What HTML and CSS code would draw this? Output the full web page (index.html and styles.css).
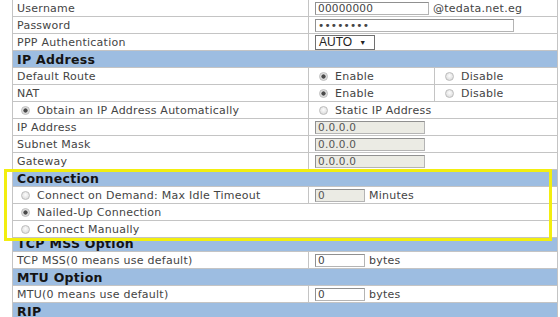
FILE: index.html
```html
<!DOCTYPE html>
<html lang="en">
<head>
  <meta charset="UTF-8">
  <title>WAN Setup</title>
  <link rel="stylesheet" href="styles.css">
</head>
<body>
  <div class="panel">
    <div class="row">
      <div class="label">Username</div>
      <div class="value"><input class="field w-user" type="text" value="00000000"><span class="unit">@tedata.net.eg</span></div>
    </div>
    <div class="row">
      <div class="label">Password</div>
      <div class="value"><input class="field w-pass" type="password" value="00000000"></div>
    </div>
    <div class="row">
      <div class="label">PPP Authentication</div>
      <div class="value"><span class="select">AUTO<span class="arrow">&#9660;</span></span></div>
    </div>

    <div class="row head">IP Address</div>
    <div class="row">
      <div class="label">Default Route</div>
      <div class="value half"><label class="opt"><input type="radio" name="route" checked>Enable</label></div>
      <div class="value"><label class="opt"><input type="radio" name="route">Disable</label></div>
    </div>
    <div class="row">
      <div class="label">NAT</div>
      <div class="value half"><label class="opt"><input type="radio" name="nat" checked>Enable</label></div>
      <div class="value"><label class="opt"><input type="radio" name="nat">Disable</label></div>
    </div>
    <div class="row">
      <div class="label"><label class="opt"><input type="radio" name="ip" checked>Obtain an IP Address Automatically</label></div>
      <div class="value"><label class="opt"><input type="radio" name="ip">Static IP Address</label></div>
    </div>
    <div class="row">
      <div class="label">IP Address</div>
      <div class="value"><input class="field w-ip" type="text" value="0.0.0.0" disabled></div>
    </div>
    <div class="row">
      <div class="label">Subnet Mask</div>
      <div class="value"><input class="field w-ip" type="text" value="0.0.0.0" disabled></div>
    </div>
    <div class="row">
      <div class="label">Gateway</div>
      <div class="value"><input class="field w-ip" type="text" value="0.0.0.0" disabled></div>
    </div>

    <div class="row head">Connection</div>
    <div class="row">
      <div class="label"><label class="opt"><input type="radio" name="conn">Connect on Demand: Max Idle Timeout</label></div>
      <div class="value"><input class="field w-num" type="text" value="0" disabled><span class="unit">Minutes</span></div>
    </div>
    <div class="row">
      <div class="full"><label class="opt"><input type="radio" name="conn" checked>Nailed-Up Connection</label></div>
    </div>
    <div class="row">
      <div class="full"><label class="opt"><input type="radio" name="conn">Connect Manually</label></div>
    </div>

    <div class="row head short"><span>TCP MSS Option</span></div>
    <div class="row">
      <div class="label">TCP MSS(0 means use default)</div>
      <div class="value"><input class="field w-num" type="text" value="0"><span class="unit">bytes</span></div>
    </div>

    <div class="row head">MTU Option</div>
    <div class="row">
      <div class="label">MTU(0 means use default)</div>
      <div class="value"><input class="field w-num" type="text" value="0"><span class="unit">bytes</span></div>
    </div>

    <div class="row head">RIP</div>
  </div>

  <!-- highlight drawn over the connection block -->
  <div class="mark"></div>
</body>
</html>
```

FILE: styles.css
```css
* {
  box-sizing: border-box;
}

body {
  margin: 0;
  background: #fff;
  font-family: "DejaVu Sans", Verdana, sans-serif;
  font-size: 11px;
  letter-spacing: 0.25px;
  color: #444;
  overflow: hidden;
}

.panel {
  margin-left: 12px;
  width: 546px;
  border-left: 1px solid #c4c4c4;
  border-right: 1px solid #c4c4c4;
}

.row {
  display: flex;
  height: 17px;
  border-bottom: 1px solid #c4c4c4;
}

.label {
  width: 296px;
  border-right: 1px solid #c4c4c4;
  padding-left: 4px;
  display: flex;
  align-items: center;
}

.value {
  flex: 1;
  padding-left: 6px;
  display: flex;
  align-items: center;
}

.value.half {
  flex: none;
  width: 126px;
  border-right: 1px solid #c4c4c4;
}

.full {
  flex: 1;
  padding-left: 4px;
  display: flex;
  align-items: center;
}

/* section headers */
.head {
  background: #9dbde1;
  font-weight: bold;
  font-size: 12.5px;
  letter-spacing: 0.3px;
  color: #141414;
  padding-left: 4px;
  align-items: center;
}

/* this header is partly hidden under the highlight */
.head.short {
  height: 14px;
  align-items: flex-start;
}

.head.short span {
  line-height: 16px;
  margin-top: -2px;
}

/* inputs */
.field {
  height: 13px;
  margin: 0;
  padding: 0 2px;
  border: 1px solid #b4b4b4;
  border-top-color: #909090;
  border-left-color: #909090;
  font-family: "DejaVu Sans", Verdana, sans-serif;
  font-size: 10.5px;
  letter-spacing: 0.2px;
  color: #444;
  background: #fff;
}

.field:disabled {
  background: #ebebe4;
  color: #555;
}

.w-user { width: 114px; }
.w-pass { width: 199px; }
.w-ip { width: 110px; }
.w-num { width: 50px; }

.unit {
  margin-left: 4px;
}

.select {
  display: inline-flex;
  align-items: center;
  width: 60px;
  height: 15px;
  padding-left: 3px;
  border: 1px solid #707070;
  font-family: "Liberation Sans", Arial, sans-serif;
  font-size: 12px;
  letter-spacing: 0;
  color: #222;
}

.arrow {
  font-size: 7px;
  margin-left: 7px;
}

/* radios */
.opt {
  display: flex;
  align-items: center;
}

.opt input {
  appearance: none;
  -webkit-appearance: none;
  width: 9px;
  height: 9px;
  margin: 0 7px 0 4px;
  border-radius: 50%;
  border: 1px solid #bcbcbc;
  background: radial-gradient(circle at 50% 40%, #fdfdfd, #d4d4d4);
}

.opt input:checked {
  background: radial-gradient(circle, #4a4a4a 0 1.8px, #d8d8d8 2.4px, #f2f2f2);
}

.mark {
  position: absolute;
  left: 4px;
  top: 169px;
  width: 548px;
  height: 72px;
  border: 3px solid #f2ee10;
}
```
